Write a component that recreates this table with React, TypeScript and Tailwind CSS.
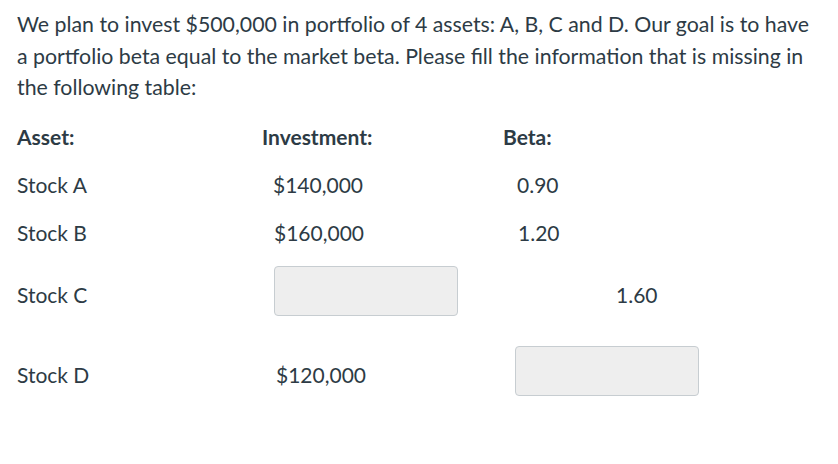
const rows = [
  { name: "Stock A", investment: "$140,000", invPad: "pl-[11px]", beta: "0.90", betaPad: "pl-[14px]" },
  { name: "Stock B", investment: "$160,000", invPad: "pl-[12px]", beta: "1.20", betaPad: "pl-[15px]" },
];

function Blank() {
  return <div className="h-[50px] w-[184px] rounded-[4px] border border-[#c7cdd1] bg-[#eeeeee]" />;
}

export default function App() {
  return (
    <div className="min-h-[464px] w-[838px] bg-white pl-[17px] text-[21px] leading-[31.5px] text-[#2d3b45] font-['Lato','Liberation_Sans',sans-serif]">
      <p className="pt-[9px] pr-[20px] text-[21.3px] leading-[31.5px]">
        We plan to invest $500,000 in portfolio of 4 assets: A, B, C and D. Our goal is to have a portfolio beta
        equal to the market beta. Please fill the information that is missing in the following table:
      </p>

      <div className="mt-[9.5px]">
        <div className="grid h-[48px] grid-cols-[245px_241px_1fr] items-center font-bold">
          <div>Asset:</div>
          <div>Investment:</div>
          <div>Beta:</div>
        </div>

        {rows.map((r) => (
          <div key={r.name} className="grid h-[48px] grid-cols-[245px_241px_1fr] items-center">
            <div>{r.name}</div>
            <div className={r.invPad}>{r.investment}</div>
            <div className={r.betaPad}>{r.beta}</div>
          </div>
        ))}

        <div className="mt-[9px] grid h-[50px] grid-cols-[245px_241px_1fr] items-start">
          <div className="mt-[13px]">Stock C</div>
          <div className="pl-[12px]">
            <Blank />
          </div>
          <div className="mt-[13px] pl-[113px]">1.60</div>
        </div>

        <div className="mt-[30px] grid h-[50px] grid-cols-[245px_241px_1fr] items-start">
          <div className="mt-[13px]">Stock D</div>
          <div className="mt-[13px] pl-[14px]">$120,000</div>
          <div className="pl-[12px]">
            <Blank />
          </div>
        </div>
      </div>
    </div>
  );
}
